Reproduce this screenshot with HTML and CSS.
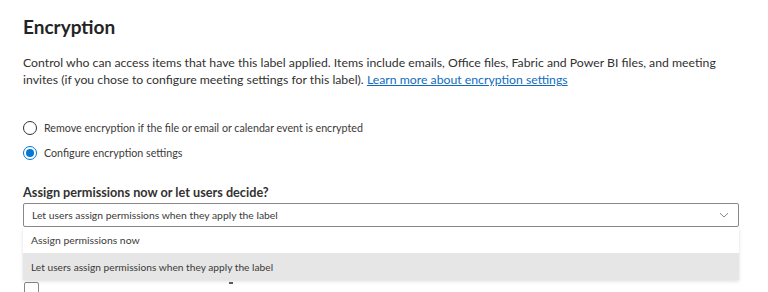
FILE: index.html
```html
<!DOCTYPE html>
<html>
<head>
<meta charset="utf-8">
<link rel="stylesheet" href="styles.css">
</head>
<body>
<div class="page">
  <h1 class="title">Encryption</h1>
  <p class="desc">Control who can access items that have this label applied. Items include emails, Office files, Fabric and Power BI files, and meeting invites (if you chose to configure meeting settings for this label). <a class="link" href="#">Learn more about encryption settings</a></p>
  <div class="radios">
    <label class="radio"><span class="circle"></span><span>Remove encryption if the file or email or calendar event is encrypted</span></label>
    <label class="radio"><span class="circle checked"></span><span>Configure encryption settings</span></label>
  </div>
  <div class="field">
    <div class="field-label">Assign permissions now or let users decide?</div>
    <div class="dropdown-wrap">
      <div class="dropdown">
        <span class="value">Let users assign permissions when they apply the label</span>
        <svg class="chev" width="12" height="12" viewBox="0 0 12 12"><path d="M2 4.2 L6 8 L10 4.2" fill="none" stroke="#8a8886" stroke-width="1"/></svg>
      </div>
      <div class="below">
        <span class="cb"></span>
        <span class="mark"></span>
      </div>
      <div class="menu">
        <div class="item">Assign permissions now</div>
        <div class="item selected">Let users assign permissions when they apply the label</div>
      </div>
    </div>
  </div>
</div>
</body>
</html>
```
FILE: styles.css
```css
html, body { margin: 0; padding: 0; background: #fff; overflow: hidden; }
body { font-family: "Lato", "Noto Sans", sans-serif; color: #323130; }
.page { padding: 14px 29px 0 23px; height: 292px; box-sizing: border-box; overflow: hidden; }
.title { font-size: 19px; font-weight: 700; margin: 0; line-height: 26px; color: #242424; }
.desc { font-size: 12.25px; line-height: 17px; margin: 14px 0 0; color: #323130; }
.link { color: #0f6cbd; text-decoration: underline; }
.radios { margin-top: 32px; display: flex; flex-direction: column; gap: 9px; }
.radio { display: flex; align-items: center; gap: 7px; font-size: 10.7px; line-height: 16px; color: #3b3a39; }
.circle { width: 14px; height: 14px; border: 1px solid #323130; border-radius: 50%; box-sizing: border-box; position: relative; flex: none; }
.circle.checked { border-color: #0078d4; }
.circle.checked::after { content: ""; position: absolute; left: 2px; top: 2px; width: 8px; height: 8px; border-radius: 50%; background: #0078d4; }
.field { margin-top: 23px; }
.field-label { font-size: 12.7px; font-weight: 700; line-height: 16px; color: #323130; }
.dropdown-wrap { position: relative; margin-top: 3px; }
.dropdown { height: 24px; box-sizing: border-box; border: 1px solid #8a8886; border-radius: 2px; display: flex; align-items: center; justify-content: space-between; padding: 0 8px 0 8px; color: #3b3a39; }
.value { font-size: 10.35px; }
.chev { flex: none; }
.below { padding-top: 55px; display: flex; align-items: flex-start; }
.cb { display: block; width: 13px; height: 13px; border: 1px solid #8a8886; border-radius: 2px; margin-left: 1px; flex: none; }
.mark { display: block; width: 4px; height: 2px; background: #605e5c; margin-left: 190px; }
.menu { position: absolute; left: 0; right: 0; top: 24px; background: #fff; box-shadow: 0 1.6px 3.6px rgba(0,0,0,.13), 0 0.3px 0.9px rgba(0,0,0,.11); }
.item { height: 26px; display: flex; align-items: center; padding: 0 8px; font-size: 10.4px; color: #3b3a39; }
.item.selected { background: #e6e6e6; height: 27px; font-size: 10.2px; }
```
